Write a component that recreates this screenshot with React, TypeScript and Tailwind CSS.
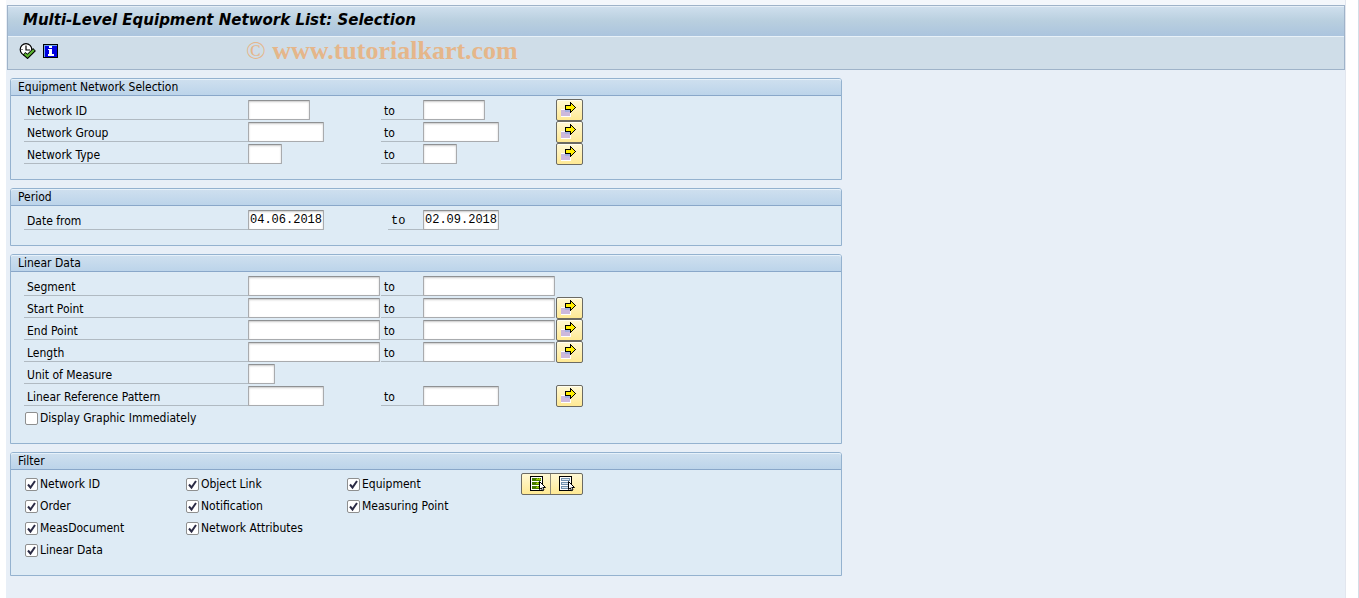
import React from "react";

type RowProps = {
  label: string;
  size: string;
  value?: string;
  valueTo?: string;
  single?: boolean;
  more?: boolean;
  wideGap?: boolean;
};

const fieldClass =
  "h-5 rounded-[1px] border border-[#a9abae] border-t-[#8f9193] bg-white pl-px font-['Liberation_Mono',monospace] text-[12px] text-black shadow-[inset_0_1px_2px_#c8c8c8] outline-none";

const ExecuteIcon = () => (
  <svg width="17" height="16" viewBox="0 0 17 16">
    <circle cx="7" cy="6.500" r="5.800" fill="#fff" stroke="#000" strokeWidth="1.200" />
    <path d="M7 2.500v4.500h4M2.500 6.500h1M7 10v1.500" stroke="#000" strokeWidth="1.200" fill="none" />
    <path d="M5 10.500l3.500 3l7-7" stroke="#000" strokeWidth="4" fill="none" />
    <path d="M5.700 10.800l2.800 2.500l6.300-6.300" stroke="#5cb531" strokeWidth="2.200" fill="none" />
  </svg>
);

const InfoIcon = () => (
  <svg width="15" height="14" viewBox="0 0 15 14" shapeRendering="crispEdges">
    <rect width="15" height="14" fill="#000" />
    <rect x="1" y="1" width="13" height="12" fill="#6fa8e8" />
    <rect x="2" y="2" width="12" height="11" fill="#0000e0" />
    <path d="M6 2h3v2H6zM5 5h4v5h2v2H5v-2h1V6H5z" fill="#fff" />
  </svg>
);

const ArrowIcon = () => (
  <svg width="17" height="16" viewBox="0 0 17 16" shapeRendering="crispEdges">
    <path d="M0 7h10v8H0z" fill="#fff" />
    <path d="M0 8h9v6H0z" fill="#cdb9dc" />
    <path d="M4 8h5v2H4z" fill="#a3b0e0" />
    <path
      d="M4 3h5V0h1v1h1v1h1v1h1v1h1v1h1v1h-1v1h-1v1h-1v1h-1v1h-1v1H9V8H4z"
      fill="#000"
    />
    <path d="M5 4h5V2h1v1h1v1h1v1h1v1h-1v1h-1v1h-1v1h-1V7H5z" fill="#ffee00" />
  </svg>
);

const ListIcon = ({ green }: { green?: boolean }) => (
  <svg width="16" height="16" viewBox="0 0 16 16">
    <g shapeRendering="crispEdges">
      <path d="M0 0h13v15H0z" fill="#000" />
      <path d="M1 1h11v13H1z" fill="#fff" />
      {[2, 6, 10].map((y) => (
        <g key={y}>
          <rect x="2" y={y} width="9" height="3" fill={green ? "#457a00" : "#7191ad"} />
          <rect
            x={green ? 6 : 3}
            y={y + 1}
            width={green ? 5 : 7}
            height="1"
            fill={green ? "#99c800" : "#dce8f2"}
          />
          {green && <path d={`M7 ${y}h1v1h-1zM9 ${y}h1v1h-1z`} fill="#99c800" />}
        </g>
      ))}
    </g>
    <path
      d="M9.500 5.500v8l1.800-1.500l1.200 2.700l1.500-.7l-1.200-2.500h2.700z"
      fill="#fff"
      stroke="#000"
      strokeWidth="1"
    />
  </svg>
);

const MoreButton = ({ label }: { label: string }) => (
  <button
    type="button"
    aria-label={label}
    className="flex h-[22px] w-[27px] items-center justify-center rounded-[2px] border border-[#6b6a63] bg-linear-to-b from-[#fff8d4] to-[#ffe993] shadow-[inset_0_1px_0_#fffdf0]"
  >
    <ArrowIcon />
  </button>
);

const Panel = ({ title, children }: { title: string; children: React.ReactNode }) => (
  <section
    aria-label={title}
    className="w-full rounded-t-[3px] border border-[#94b2cf] bg-[#deebf5] pb-[14px]"
  >
    <h2 className="h-[17px] rounded-t-[2px] border-b border-[#89a7c9] bg-linear-to-b from-[#cfe0ef] to-[#bcd4ea] pl-[7px] leading-4 shadow-[inset_0_1px_0_#e6f1fa]">
      {title}
    </h2>
    <div className="pt-[3px] pl-[13px]">{children}</div>
  </section>
);

const Row = ({ label, size, value, valueTo, single, more, wideGap }: RowProps) => {
  const id = label.toLowerCase().replaceAll(" ", "-");

  return (
    <div className="flex h-[22px] items-center">
      <label
        htmlFor={id}
        className="h-5 w-[224px] border-b border-[#b0bac2] pl-[3px] leading-[22px]"
      >
        {label}
      </label>
      <div className="flex w-[133px]">
        <input id={id} defaultValue={value} className={`${fieldClass} ${size}`} />
      </div>
      {!single && (
        <>
          <div className={`flex w-[42px] ${wideGap ? "pl-[7px]" : ""}`}>
            <label
              htmlFor={`${id}-to`}
              className={`h-5 w-full border-b border-[#b0bac2] pl-[3px] leading-[22px] ${wideGap ? "font-['Liberation_Mono',monospace]" : ""}`}
            >
              to
            </label>
          </div>
          <div className="flex w-[133px]">
            <input id={`${id}-to`} defaultValue={valueTo} className={`${fieldClass} ${size}`} />
          </div>
          {more && <MoreButton label={`Multiple selection ${label}`} />}
        </>
      )}
    </div>
  );
};

const Check = ({ label, checked }: { label: string; checked?: boolean }) => (
  <label className="flex h-[22px] items-center gap-[2px] pl-px">
    <span className="grid">
      <input
        type="checkbox"
        defaultChecked={checked}
        className="peer col-start-1 row-start-1 size-[13px] appearance-none rounded-[2px] border border-[#8e8f8f] bg-white"
      />
      <svg
        viewBox="0 0 13 13"
        className="pointer-events-none col-start-1 row-start-1 hidden size-[13px] peer-checked:block"
      >
        <path d="M3 6.500l2.500 3L10 3" stroke="#2b2b45" strokeWidth="2" fill="none" />
      </svg>
    </span>
    {label}
  </label>
);

const App = () => {
  return (
    <div className="flex min-h-screen border-r border-[#d3dde6] bg-white font-['DejaVu_Sans_Condensed','DejaVu_Sans',sans-serif] text-[12px] text-black">
      <main className="ml-[6px] mr-3 flex-1 border-r border-[#e2e6ee] bg-[#e8eff7]">
        <div className="h-[5px] bg-[#f4f7fb]"></div>
        <header className="ml-px border border-[#9fb3c9] bg-[#cfdde8]">
          <h1 className="h-[31px] border-b border-[#e8f1f8] bg-linear-to-b from-[#d0e0ee] via-[#b9cfdf] to-[#abc4de] pl-[15px] font-['DejaVu_Sans',sans-serif] text-[15px] leading-7 font-bold italic shadow-[inset_0_1px_0_#e6eff7]">
            Multi-Level Equipment Network List: Selection
          </h1>
          <div className="flex h-8 items-center pb-1 pl-[11px]">
            <button type="button" aria-label="Execute">
              <ExecuteIcon />
            </button>
            <button type="button" aria-label="Information" className="ml-[7px]">
              <InfoIcon />
            </button>
            <p className="ml-[188px] font-['Liberation_Serif',serif] text-[26px] leading-8 font-bold text-[#e5b68a]">
              <span className="font-normal">©</span> www.tutorialkart.com
            </p>
          </div>
        </header>
        <form className="ml-1 mt-2 flex max-w-[832px] flex-col gap-2">
          <Panel title="Equipment Network Selection">
            <Row label="Network ID" size="w-[62px]" more />
            <Row label="Network Group" size="w-[76px]" more />
            <Row label="Network Type" size="w-[34px]" more />
          </Panel>
          <Panel title="Period">
            <Row label="Date from" size="w-[76px]" value="04.06.2018" valueTo="02.09.2018" wideGap />
          </Panel>
          <Panel title="Linear Data">
            <Row label="Segment" size="w-[132px]" />
            <Row label="Start Point" size="w-[132px]" more />
            <Row label="End Point" size="w-[132px]" more />
            <Row label="Length" size="w-[132px]" more />
            <Row label="Unit of Measure" size="w-[27px]" single />
            <Row label="Linear Reference Pattern" size="w-[76px]" more />
            <Check label="Display Graphic Immediately" />
          </Panel>
          <Panel title="Filter">
            <div className="flex">
              <div className="w-[161px]">
                <Check label="Network ID" checked />
                <Check label="Order" checked />
                <Check label="MeasDocument" checked />
                <Check label="Linear Data" checked />
              </div>
              <div className="w-[161px]">
                <Check label="Object Link" checked />
                <Check label="Notification" checked />
                <Check label="Network Attributes" checked />
              </div>
              <div className="w-[175px]">
                <Check label="Equipment" checked />
                <Check label="Measuring Point" checked />
              </div>
              <div className="flex h-[22px] w-[62px] rounded-[2px] border border-[#6b6a63] bg-linear-to-b from-[#fff8d4] to-[#ffe993]">
                <button
                  type="button"
                  aria-label="Select all"
                  className="flex w-[29px] items-center border-r border-[#8f8b78] pl-2"
                >
                  <ListIcon green />
                </button>
                <button type="button" aria-label="Deselect all" className="flex flex-1 items-center pl-2">
                  <ListIcon />
                </button>
              </div>
            </div>
          </Panel>
        </form>
      </main>
    </div>
  );
};

export default App;
